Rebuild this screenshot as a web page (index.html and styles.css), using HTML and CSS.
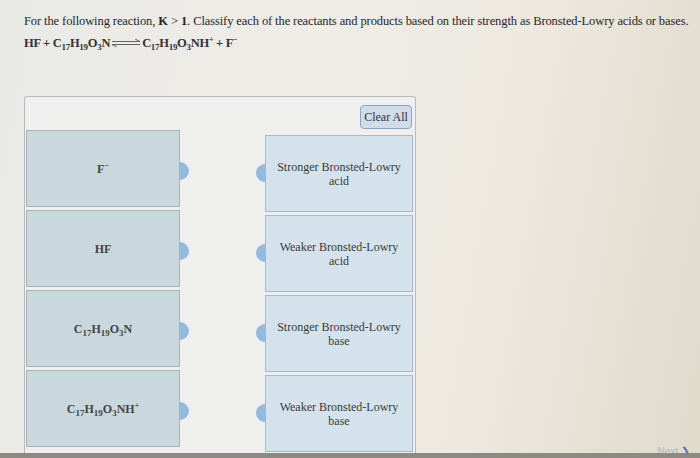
FILE: index.html
```html
<!DOCTYPE html>
<html>
<head>
<meta charset="utf-8">
<link rel="stylesheet" href="styles.css">
</head>
<body>
<div class="page">
  <div class="header">
    <p class="title">For the following reaction, <b>K</b> &gt; <b>1</b>. Classify each of the reactants and products based on their strength as Bronsted-Lowry acids or bases.</p>
    <p class="eq"><span>HF + C<sub>17</sub>H<sub>19</sub>O<sub>3</sub>N</span><svg class="arrow" width="30" height="8" viewBox="0 0 30 8"><path d="M1 2.5 H29 M24 0 L29 2.5" stroke="#555" stroke-width="0.9" fill="none"/><path d="M29 5.5 H1 M6 8 L1 5.5" stroke="#555" stroke-width="0.9" fill="none"/></svg><span>C<sub>17</sub>H<sub>19</sub>O<sub>3</sub>NH<sup>+</sup> + F<sup>−</sup></span></p>
  </div>
  <div class="main">
    <div class="panel">
      <div class="toolbar"><button class="clear">Clear All</button></div>
      <div class="columns">
        <div class="col left">
          <div class="item"><div class="box lbox"><span>F<sup>−</sup></span></div><span class="tab tab-r"></span></div>
          <div class="item"><div class="box lbox"><span>HF</span></div><span class="tab tab-r"></span></div>
          <div class="item"><div class="box lbox"><span>C<sub>17</sub>H<sub>19</sub>O<sub>3</sub>N</span></div><span class="tab tab-r"></span></div>
          <div class="item"><div class="box lbox"><span>C<sub>17</sub>H<sub>19</sub>O<sub>3</sub>NH<sup>+</sup></span></div><span class="tab tab-r"></span></div>
        </div>
        <div class="col right">
          <div class="item"><span class="tab tab-l"></span><div class="box rbox"><span>Stronger Bronsted-Lowry<br>acid</span></div></div>
          <div class="item"><span class="tab tab-l"></span><div class="box rbox"><span>Weaker Bronsted-Lowry<br>acid</span></div></div>
          <div class="item"><span class="tab tab-l"></span><div class="box rbox"><span>Stronger Bronsted-Lowry<br>base</span></div></div>
          <div class="item"><span class="tab tab-l"></span><div class="box rbox"><span>Weaker Bronsted-Lowry<br>base</span></div></div>
        </div>
      </div>
    </div>
    <div class="side">
      <span class="next">Next <span class="chev">❯</span></span>
    </div>
  </div>
  <div class="bezel"></div>
</div>
</body>
</html>
```

FILE: styles.css
```css
html, body {
  margin: 0;
  padding: 0;
}
body {
  width: 700px;
  height: 458px;
  overflow: hidden;
  font-family: "Liberation Serif", "DejaVu Serif", serif;
  color: #2a2a2a;
}
.page {
  width: 700px;
  height: 458px;
  display: flex;
  flex-direction: column;
  background: linear-gradient(100deg, #e9e9e6 0%, #eeede8 40%, #ede9e0 70%, #e0dacb 100%);
}
.header {
  padding: 13px 0 0 24px;
}
.title {
  margin: 0;
  font-family: "Liberation Serif", "DejaVu Serif", serif;
  font-size: 12.5px;
  line-height: 16px;
  letter-spacing: -0.1px;
  white-space: nowrap;
  color: #262626;
}
.eq {
  margin: 6px 0 0 0;
  font-family: "Liberation Serif", "DejaVu Serif", serif;
  font-size: 12.5px;
  line-height: 16px;
  font-weight: bold;
  letter-spacing: -0.3px;
  color: #333;
  display: flex;
  align-items: center;
  white-space: pre;
}
.eq sub, .box sub {
  font-size: 9px;
  vertical-align: -3px;
  line-height: 0;
}
.eq sup, .box sup {
  font-size: 8px;
  vertical-align: 5px;
  line-height: 0;
}
.arrow {
  margin: 0 1px;
}
.main {
  flex: 1;
  display: flex;
  margin-top: 45px;
  min-height: 0;
}
.panel {
  margin-left: 24px;
  width: 390px;
  border: 1px solid #b6bac1;
  border-bottom: none;
  border-radius: 3px 3px 0 0;
  background: #efefee;
  display: flex;
  flex-direction: column;
}
.toolbar {
  display: flex;
  justify-content: flex-end;
  padding: 8px 3px 0 0;
}
.clear {
  width: 52px;
  height: 24px;
  padding: 0;
  border: 1px solid #8da3bf;
  border-radius: 4px;
  background: #d0dde9;
  font-family: "Liberation Serif", "DejaVu Serif", serif;
  font-size: 12px;
  color: #333;
}
.columns {
  display: flex;
  justify-content: space-between;
  padding: 1px 2px 0 1px;
}
.col {
  display: flex;
  flex-direction: column;
  gap: 3px;
}
.col.right {
  margin-top: 5px;
}
.item {
  display: flex;
  align-items: center;
}
.box {
  height: 77px;
  box-sizing: border-box;
  display: flex;
  align-items: center;
  justify-content: center;
  text-align: center;
  font-family: "Liberation Serif", "DejaVu Serif", serif;
  font-size: 12px;
  line-height: 14px;
  color: #3a3a3a;
}
.lbox {
  width: 154px;
  background: #c9d8dd;
  border: 1px solid #a7b3ba;
  font-weight: bold;
  color: #444;
}
.rbox {
  width: 148px;
  background: #d4e3eb;
  border: 1px solid #a9b8c8;
}
.tab {
  display: block;
  width: 9px;
  height: 18px;
  background: #95badf;
}
.tab-r {
  border-radius: 0 9px 9px 0;
  margin-top: 4px;
}
.tab-l {
  border-radius: 9px 0 0 9px;
  margin-top: -2px;
}
.side {
  flex: 1;
  display: flex;
  justify-content: flex-end;
  align-items: flex-end;
  padding-right: 10px;
}
.next {
  font-family: "Liberation Sans", "DejaVu Sans", sans-serif;
  font-size: 10px;
  line-height: 10px;
  color: #a9b8c8;
  margin-bottom: -4px;
}
.chev {
  color: #4d79a8;
  font-size: 11px;
}
.bezel {
  height: 5px;
  background: #8d8a83;
}
```
